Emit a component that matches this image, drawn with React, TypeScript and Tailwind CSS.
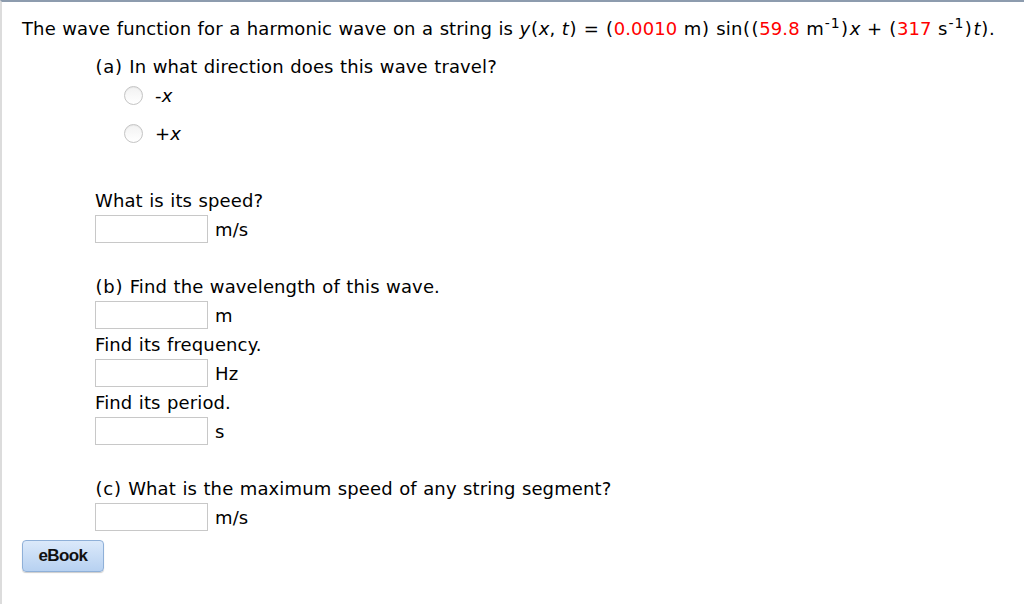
import React from "react";

const Input = () => (
  <input
    type="text"
    className="w-[113px] h-[28px] border border-[#c8c8c8] bg-white outline-none"
  />
);

const Radio = ({ label }: { label: React.ReactNode }) => (
  <div className="flex items-center h-[20px]">
    <span className="w-[19px] h-[19px] rounded-full border border-[#c4c4c4] bg-gradient-to-b from-[#f2f2f2] to-white shadow-[inset_0_1px_1px_rgba(0,0,0,0.05)]" />
    <span className="ml-[12px]">{label}</span>
  </div>
);

const Sup = ({ children }: { children: React.ReactNode }) => (
  <sup className="text-[14px] tracking-[0.8px] ml-[1px] relative top-[-7px]">{children}</sup>
);

const L = () => <span className="mx-[0.6px]">(</span>;
const R = () => <span className="mx-[0.6px]">)</span>;

export default function App() {
  return (
    <div
      className="w-[1024px] h-[604px] bg-white border-t-2 border-t-[#8d9cae] border-l-2 border-l-[#dcdcdc] text-black text-[18px] tracking-[0.12px] [word-spacing:0.6px] overflow-hidden"
      style={{ fontFamily: '"DejaVu Sans", Verdana, sans-serif' }}
    >
      <div className="pl-[20px] pt-[17px] leading-[20px] whitespace-nowrap">
        The wave function for a harmonic wave on a string is <i>y</i><L /><i>x</i>, <i>t</i><R /> = <L />
        <span className="text-[#ff0000]">0.0010</span> m<R /> sin<L /><L />
        <span className="text-[#ff0000]">59.8</span> m<Sup>-1</Sup><R /><i className="ml-[1px]">x</i> + <L />
        <span className="text-[#ff0000]">317</span> s<Sup>-1</Sup><R /><i className="ml-[1px]">t</i><R />.
      </div>
      <div className="pl-[93px]">
        <div className="mt-[18px] leading-[20px]"><L />a<R /> In what direction does this wave travel?</div>
        <div className="pl-[29px] mt-[8px] flex flex-col gap-[18px]">
          <Radio label={<span>-<i>x</i></span>} />
          <Radio label={<span>+<i>x</i></span>} />
        </div>
        <div className="mt-[48px] leading-[20px]">What is its speed?</div>
        <div className="flex items-center mt-[4px]">
          <Input />
          <span className="ml-[7px]">m/s</span>
        </div>
        <div className="mt-[34px] leading-[20px]"><L />b<R /> Find the wavelength of this wave.</div>
        <div className="flex items-center mt-[4px]">
          <Input />
          <span className="ml-[7px]">m</span>
        </div>
        <div className="mt-[6px] leading-[20px]">Find its frequency.</div>
        <div className="flex items-center mt-[4px]">
          <Input />
          <span className="ml-[7px]">Hz</span>
        </div>
        <div className="mt-[6px] leading-[20px]">Find its period.</div>
        <div className="flex items-center mt-[4px]">
          <Input />
          <span className="ml-[7px]">s</span>
        </div>
        <div className="mt-[34px] leading-[20px]"><L />c<R /> What is the maximum speed of any string segment?</div>
        <div className="flex items-center mt-[4px]">
          <Input />
          <span className="ml-[7px]">m/s</span>
        </div>
      </div>
      <div className="pl-[20px] mt-[9px]">
        <button
          className="w-[82px] h-[32px] rounded-[4px] border border-[#8fb0d8] bg-gradient-to-b from-[#dbe9fa] to-[#b7d1f1] shadow-[0_1px_1px_rgba(0,0,0,0.2)] font-bold text-[17px] tracking-[-0.6px] [word-spacing:0px] text-[#111]"
          style={{ fontFamily: '"Liberation Sans", Arial, sans-serif' }}
        >
          eBook
        </button>
      </div>
    </div>
  );
}
